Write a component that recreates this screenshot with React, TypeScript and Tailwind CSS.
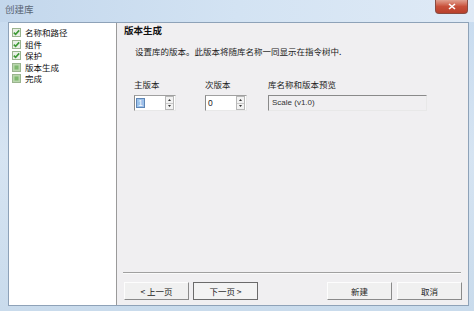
import React from "react";

const CJK = { fontFamily: '"Noto Sans CJK SC", "Noto Sans", sans-serif' };

function Check({ checked }: { checked: boolean }) {
  return (
    <svg width="9" height="9" viewBox="0 0 9 9" className="shrink-0">
      <rect x="0.5" y="0.5" width="8" height="8" fill={checked ? "#e9efe6" : "#b9d6ad"} stroke="#9ab48e" />
      {checked ? (
        <path d="M1.8 4.6 L3.6 6.4 L7.2 2.4" fill="none" stroke="#3d9a35" strokeWidth="1.6" />
      ) : (
        <rect x="2.5" y="2.5" width="4" height="4" fill="#7fb86f" />
      )}
    </svg>
  );
}

function Spin({ value, selected }: { value: string; selected?: boolean }) {
  return (
    <div className="flex h-[16px] w-[42px] items-center border-l border-t border-l-[#8a8a8a] border-t-[#a0a0a0] border-b border-r border-b-[#e8e8e8] border-r-[#e8e8e8] bg-white">
      <div className="flex flex-1 items-center pl-[2px] text-[8.5px] leading-none text-[#222]" style={{ fontFamily: '"Liberation Sans", sans-serif' }}>
        {selected ? (
          <span className="bg-[#9cc1ea] px-[1px] text-[#f4f8ff] outline outline-1 outline-[#5f86b6]">1</span>
        ) : (
          <span>{value}</span>
        )}
      </div>
      <div className="mr-[1px] flex h-[14px] w-[9px] flex-col border border-[#b8b8b8] bg-[#f2f2f2]">
        <div className="flex flex-1 items-center justify-center border-b border-[#c8c8c8]">
          <svg width="3" height="2" viewBox="0 0 3 2"><path d="M0 2 L1.5 0 L3 2 Z" fill="#333" /></svg>
        </div>
        <div className="flex flex-1 items-center justify-center">
          <svg width="3" height="2" viewBox="0 0 3 2"><path d="M0 0 L1.5 2 L3 0 Z" fill="#333" /></svg>
        </div>
      </div>
    </div>
  );
}

function Btn({ children, focus }: { children: React.ReactNode; focus?: boolean }) {
  return (
    <div
      className={
        "flex h-[18px] w-[65px] items-center justify-center text-[8.5px] text-[#222] " +
        (focus
          ? "border border-[#6b6b6b] bg-[#f3f3f3]"
          : "border-l border-t border-b border-r border-l-[#fdfdfd] border-t-[#fdfdfd] border-b-[#8a8a8a] border-r-[#8a8a8a] bg-[#f0f0f0]")
      }
      style={CJK}
    >
      {children}
    </div>
  );
}

export default function App() {
  const items = [
    { t: "名称和路径", c: true },
    { t: "组件", c: true },
    { t: "保护", c: true },
    { t: "版本生成", c: false },
    { t: "完成", c: false },
  ];
  return (
    <div className="flex h-[311px] w-[474px] flex-col overflow-hidden bg-gradient-to-b from-[#c7dbef] via-[#d6e4f2] to-[#c9dbec]" style={CJK}>
      {/* title bar */}
      <div className="flex h-[22px] shrink-0 items-start justify-between bg-gradient-to-r from-[#c3d7ec] via-[#d3e3f3] to-[#dfeaf6]">
        <div className="pl-[5px] pt-[3px] text-[9.5px] leading-[12px] text-[#5a6675]">创建库</div>
        <div className="mr-[6px] flex h-[14px] w-[33px] items-center justify-center rounded-b-[4px] border border-t-0 border-[#8a4b40] bg-gradient-to-b from-[#e0a090] via-[#c8503a] to-[#b8402c]">
          <svg width="8" height="7" viewBox="0 0 8 7">
            <path d="M1 1 L7 6 M7 1 L1 6" stroke="#fff" strokeWidth="1.6" />
          </svg>
        </div>
      </div>
      {/* body */}
      <div className="flex flex-1 pb-[5px] pl-[8px] pr-[5px]">
        <div className="flex flex-1 border border-[#8ea2b8] bg-[#f0eff1]">
          {/* tree */}
          <div className="flex w-[108px] shrink-0 flex-col gap-[2.5px] border-r border-[#9a9a9a] bg-white pl-[3px] pt-[5px]">
            {items.map((it) => (
              <div key={it.t} className="flex h-[9px] items-center gap-[4px] text-[8.5px] leading-none text-[#111]">
                <Check checked={it.c} />
                <span>{it.t}</span>
              </div>
            ))}
          </div>
          {/* right */}
          <div className="flex flex-1 flex-col pl-[7px] pr-[6px]">
            <div className="pt-[1px] text-[9.5px] font-bold leading-[13px] text-[#111]">版本生成</div>
            <div className="pl-[11px] pt-[8px] text-[8.5px] leading-[12px] text-[#222]">设置库的版本。此版本将随库名称一同显示在指令树中.</div>
            <div className="flex gap-[29px] pl-[10px] pt-[22px]">
              <div className="flex flex-col gap-[5px]">
                <div className="text-[8.5px] leading-[11px] text-[#222]">主版本</div>
                <Spin value="1" selected />
              </div>
              <div className="flex flex-col gap-[5px]">
                <div className="text-[8.5px] leading-[11px] text-[#222]">次版本</div>
                <Spin value="0" />
              </div>
              <div className="ml-[-8px] flex flex-col gap-[5px]">
                <div className="text-[8.5px] leading-[11px] text-[#222]">库名称和版本预览</div>
                <div className="flex h-[16px] w-[159px] items-center border-l border-t border-b border-r border-l-[#8a8a8a] border-t-[#8a8a8a] border-b-[#e8e8e8] border-r-[#e8e8e8] bg-[#f0eff1] pl-[3px] text-[8px] text-[#333]" style={{ fontFamily: '"Liberation Sans", sans-serif' }}>
                  Scale (v1.0)
                </div>
              </div>
            </div>
            <div className="flex-1" />
            <div className="mr-[1px] ml-[-1px] border-t border-b border-t-[#a0a0a0] border-b-[#fafafa]" />
            <div className="flex pb-[5px] pt-[8px]">
              <Btn>&lt; 上一页</Btn>
              <div className="w-[4px]" />
              <Btn focus>下一页 &gt;</Btn>
              <div className="flex-1" />
              <Btn>新建</Btn>
              <div className="w-[5px]" />
              <Btn>取消</Btn>
            </div>
          </div>
        </div>
      </div>
    </div>
  );
}
